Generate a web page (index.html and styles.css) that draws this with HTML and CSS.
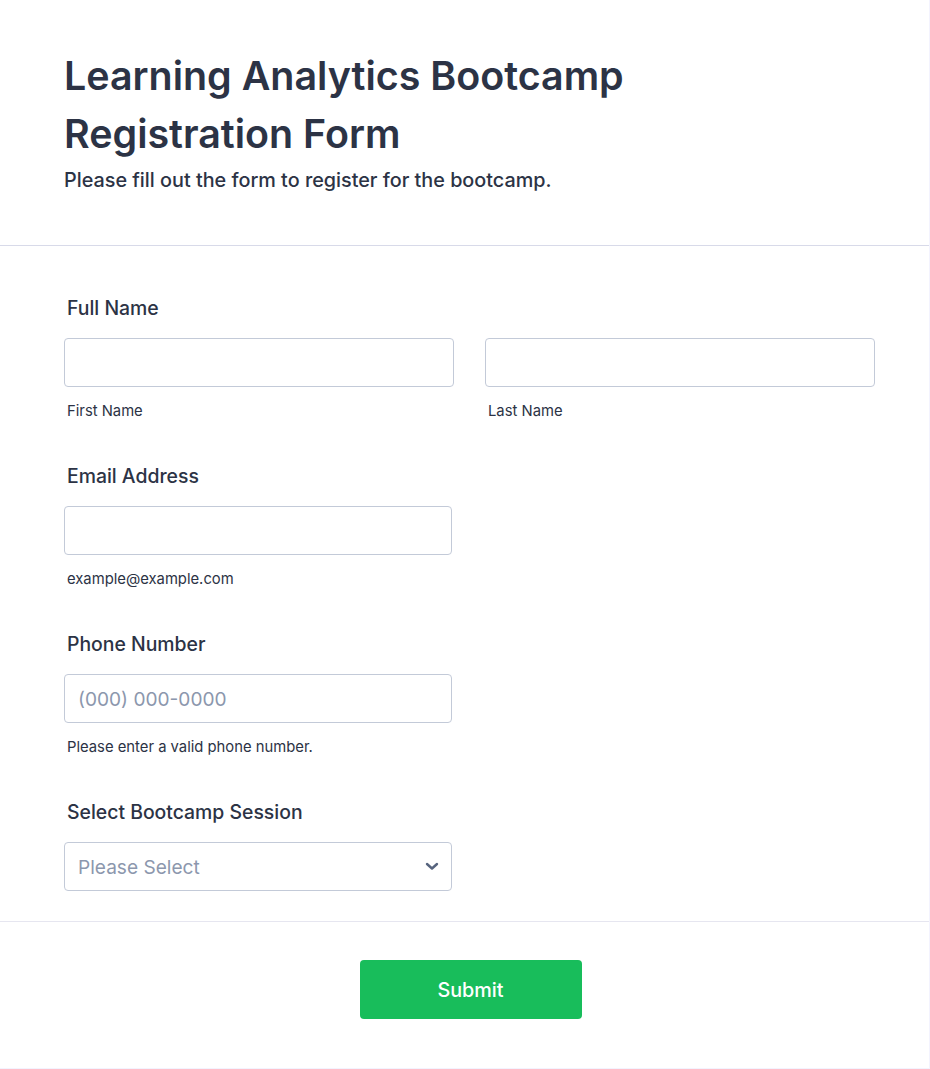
FILE: index.html
```html
<!DOCTYPE html>
<html lang="en">
<head>
<meta charset="utf-8">
<title>Learning Analytics Bootcamp Registration Form</title>
<link rel="stylesheet" href="styles.css">
</head>
<body>
<main class="card">
  <header class="form-header">
    <h1 class="title">Learning Analytics Bootcamp Registration Form</h1>
    <p class="subtitle">Please fill out the form to register for the bootcamp.</p>
  </header>
  <section class="form-body">
    <div class="field">
      <label class="label">Full Name</label>
      <div class="row">
        <div class="col">
          <input class="input input-half" type="text">
          <span class="sublabel">First Name</span>
        </div>
        <div class="col">
          <input class="input input-half" type="text">
          <span class="sublabel">Last Name</span>
        </div>
      </div>
    </div>
    <div class="field">
      <label class="label">Email Address</label>
      <input class="input input-single" type="email">
      <span class="sublabel">example@example.com</span>
    </div>
    <div class="field">
      <label class="label">Phone Number</label>
      <input class="input input-single" type="tel" placeholder="(000) 000-0000">
      <span class="sublabel">Please enter a valid phone number.</span>
    </div>
    <div class="field field-last">
      <label class="label">Select Bootcamp Session</label>
      <div class="select input-single">
        <span class="select-text">Please Select</span>
        <svg class="chevron" width="14" height="9" viewBox="0 0 14 9"><path d="M2 2 L7 6.5 L12 2" fill="none" stroke="#57647e" stroke-width="2.4" stroke-linecap="round" stroke-linejoin="round"/></svg>
      </div>
    </div>
  </section>
  <footer class="form-footer">
    <button class="submit" type="button">Submit</button>
  </footer>
</main>
</body>
</html>
```
FILE: styles.css
```css
* { box-sizing: border-box; }
html, body {
  margin: 0;
  padding: 0;
  background: #f3f3fe;
}
body {
  font-family: Inter, "Noto Sans", sans-serif;
  color: #2c3345;
}
.card {
  width: 929px;
  height: 1068px;
  background: #ffffff;
}
.form-header {
  padding: 48px 64px 51px 64px;
  border-bottom: 1px solid #d8dae9;
}
.title {
  margin: 0;
  width: 640px;
  font-size: 39.4px;
  line-height: 57.5px;
  font-weight: 600;
  color: #2c3345;
}
.subtitle {
  margin: 4px 0 0 0;
  font-size: 19.8px;
  line-height: 27px;
  font-weight: 500;
  color: #2c3345;
}
.form-body {
  padding: 49px 0 0 64px;
  border-bottom: 1px solid #e6e6f0;
}
.field {
  display: flex;
  flex-direction: column;
  align-items: flex-start;
  padding-bottom: 42px;
}
.field-last {
  padding-bottom: 30px;
}
.label {
  display: block;
  padding-left: 3px;
  font-size: 19.4px;
  line-height: 27px;
  font-weight: 500;
  color: #2c3345;
  margin-bottom: 16px;
}
.row {
  display: flex;
  gap: 31px;
}
.col {
  display: flex;
  flex-direction: column;
}
.input {
  height: 49px;
  border: 1px solid #c3cad8;
  border-radius: 4px;
  background: #fff;
  padding: 0 13px;
  font-family: Inter, "Noto Sans", sans-serif;
  font-size: 19.1px;
  color: #2c3345;
  outline: none;
}
.input::placeholder {
  color: #8c97ad;
}
.input-half { width: 390px; }
.input-single { width: 388px; }
.sublabel {
  display: block;
  margin-top: 14px;
  padding-left: 3px;
  font-size: 14.8px;
  line-height: 20px;
  color: #2c3345;
}
.select {
  height: 49px;
  border: 1px solid #c3cad8;
  border-radius: 4px;
  display: flex;
  align-items: center;
  justify-content: space-between;
  padding: 0 12px 0 13px;
}
.select-text {
  font-size: 19.1px;
  color: #8c97ad;
}
.chevron { display: block; }
.form-footer {
  display: flex;
  justify-content: center;
  padding: 38px 0 0 12px;
}
.submit {
  width: 222px;
  height: 59px;
  border: none;
  border-radius: 4px;
  background: #18bd5b;
  color: #fff;
  font-family: Inter, "Noto Sans", sans-serif;
  font-size: 19.8px;
  font-weight: 500;
  cursor: pointer;
}
```
